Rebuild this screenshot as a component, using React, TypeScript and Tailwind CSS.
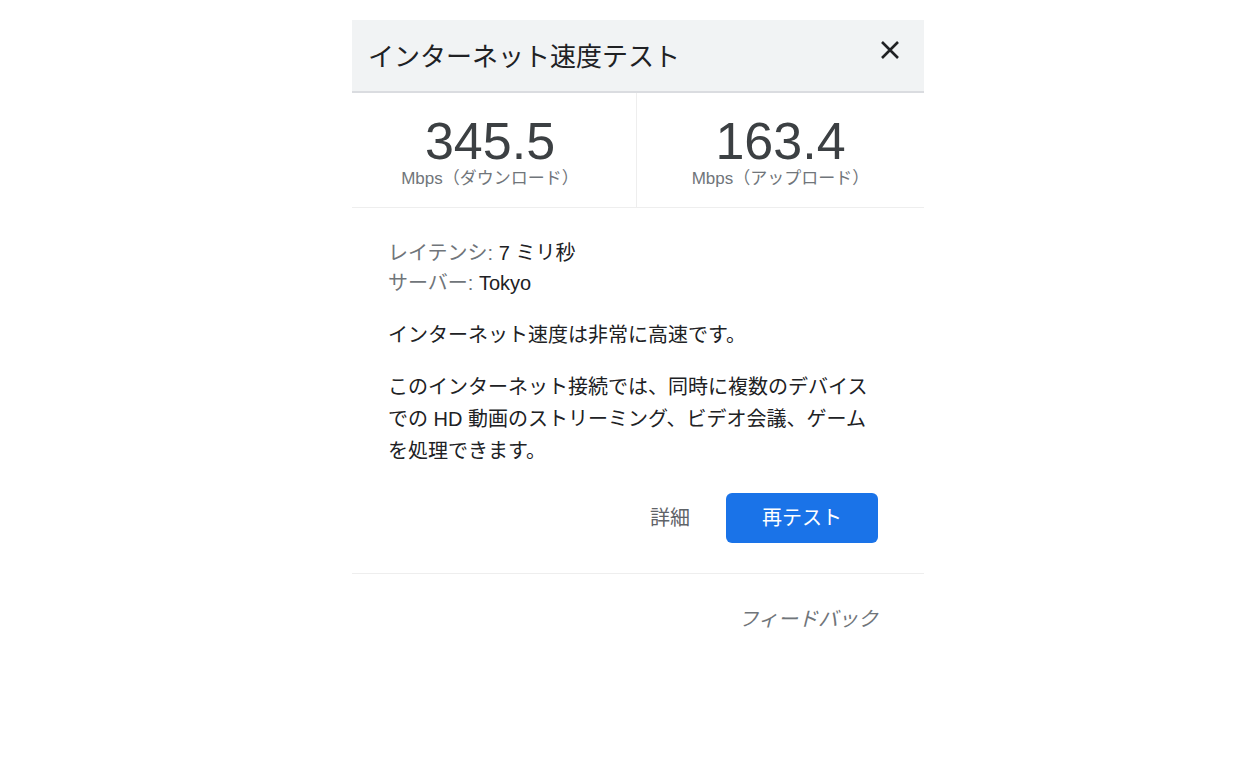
export default function App() {
  return (
    <div
      className="min-h-[780px] bg-white"
      style={{ fontFamily: '"Liberation Sans", "Noto Sans CJK JP", sans-serif' }}
    >
      <div className="ml-[352px] w-[572px] pt-5">
        {/* header */}
        <div className="flex h-[73px] items-center justify-between border-b-2 border-[#dadce0] bg-[#f1f3f4] pl-4 pr-6">
          <h1 className="mt-[3px] text-[26px] text-[#202124]">インターネット速度テスト</h1>
          <svg width="20" height="20" viewBox="0 0 20 20" className="-mt-3">
            <path d="M2 2 L18 18 M18 2 L2 18" stroke="#202124" strokeWidth="2.6" />
          </svg>
        </div>

        {/* results */}
        <div className="grid h-[115px] grid-cols-[284px_1fr] border-b border-[#eeeeee]">
          <div className="flex flex-col items-center pr-2 pt-[20px]">
            <div className="text-[52px] leading-[56px] text-[#3c4043]">345.5</div>
            <div className="text-[17px] leading-5 text-[#70757a]">Mbps（ダウンロード）</div>
          </div>
          <div className="flex flex-col items-center border-l border-[#eeeeee] pt-[20px]">
            <div className="text-[52px] leading-[56px] text-[#3c4043]">163.4</div>
            <div className="text-[17px] leading-5 text-[#70757a]">Mbps（アップロード）</div>
          </div>
        </div>

        {/* details */}
        <div className="border-b border-[#eeeeee] pb-[30px] pl-9 pr-[46px] pt-[30px] text-[20px] text-[#202124]">
          <div className="leading-[30px]">
            <div>
              <span className="text-[#70757a]">レイテンシ:</span> 7 ミリ秒
            </div>
            <div>
              <span className="text-[#70757a]">サーバー:</span> Tokyo
            </div>
          </div>
          <p className="mt-[21px] leading-[32px]">インターネット速度は非常に高速です。</p>
          <p className="mt-[20px] leading-[32px]">
            このインターネット接続では、同時に複数のデバイスでの HD 動画のストリーミング、ビデオ会議、ゲームを処理できます。
          </p>
          <div className="mt-[26px] flex items-center justify-end gap-9">
            <span className="text-[#5f6368]">詳細</span>
            <button className="h-[50px] w-[152px] rounded-[6px] bg-[#1a73e8] text-[20px] text-white">
              再テスト
            </button>
          </div>
        </div>

        <div className="flex justify-end pr-[46px] pt-[30px]">
          <span className="text-[20px] italic text-[#70757a]">フィードバック</span>
        </div>
      </div>
    </div>
  );
}
